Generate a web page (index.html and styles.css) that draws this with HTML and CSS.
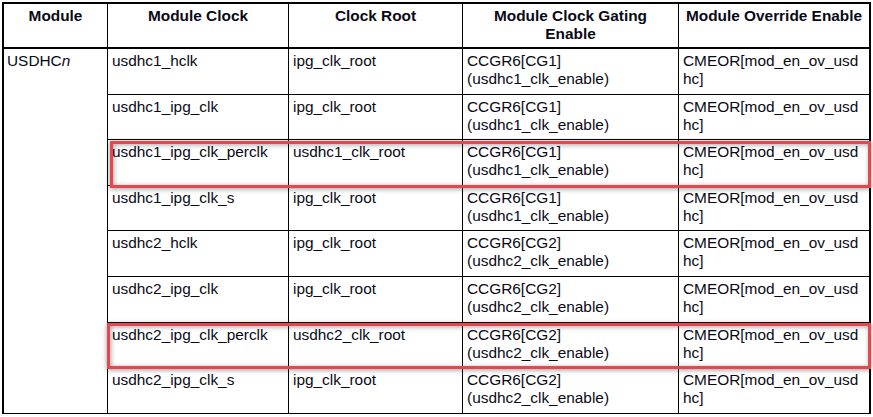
FILE: index.html
```html
<!DOCTYPE html>
<html>
<head>
<meta charset="utf-8">
<link rel="stylesheet" href="styles.css">
</head>
<body>
<div class="sheet">
  <table class="clk">
    <thead>
      <tr>
        <th class="c1">Module</th>
        <th class="c2">Module Clock</th>
        <th class="c3">Clock Root</th>
        <th class="c4">Module Clock Gating Enable</th>
        <th class="c5">Module Override Enable</th>
      </tr>
    </thead>
    <tbody>
      <tr>
        <td class="mod" rowspan="8">USDHC<i>n</i></td>
        <td>usdhc1_hclk</td>
        <td>ipg_clk_root</td>
        <td>CCGR6[CG1]<br>(usdhc1_clk_enable)</td>
        <td class="last">CMEOR[mod_en_ov_usd<br>hc]</td>
      </tr>
      <tr>
        <td>usdhc1_ipg_clk</td>
        <td>ipg_clk_root</td>
        <td>CCGR6[CG1]<br>(usdhc1_clk_enable)</td>
        <td class="last">CMEOR[mod_en_ov_usd<br>hc]</td>
      </tr>
      <tr>
        <td>usdhc1_ipg_clk_perclk</td>
        <td>usdhc1_clk_root</td>
        <td>CCGR6[CG1]<br>(usdhc1_clk_enable)</td>
        <td class="last">CMEOR[mod_en_ov_usd<br>hc]</td>
      </tr>
      <tr>
        <td>usdhc1_ipg_clk_s</td>
        <td>ipg_clk_root</td>
        <td>CCGR6[CG1]<br>(usdhc1_clk_enable)</td>
        <td class="last">CMEOR[mod_en_ov_usd<br>hc]</td>
      </tr>
      <tr>
        <td>usdhc2_hclk</td>
        <td>ipg_clk_root</td>
        <td>CCGR6[CG2]<br>(usdhc2_clk_enable)</td>
        <td class="last">CMEOR[mod_en_ov_usd<br>hc]</td>
      </tr>
      <tr>
        <td>usdhc2_ipg_clk</td>
        <td>ipg_clk_root</td>
        <td>CCGR6[CG2]<br>(usdhc2_clk_enable)</td>
        <td class="last">CMEOR[mod_en_ov_usd<br>hc]</td>
      </tr>
      <tr>
        <td>usdhc2_ipg_clk_perclk</td>
        <td>usdhc2_clk_root</td>
        <td>CCGR6[CG2]<br>(usdhc2_clk_enable)</td>
        <td class="last">CMEOR[mod_en_ov_usd<br>hc]</td>
      </tr>
      <tr>
        <td>usdhc2_ipg_clk_s</td>
        <td>ipg_clk_root</td>
        <td>CCGR6[CG2]<br>(usdhc2_clk_enable)</td>
        <td class="last">CMEOR[mod_en_ov_usd<br>hc]</td>
      </tr>
    </tbody>
  </table>
  <div class="mark mark-a"></div>
  <div class="mark mark-b"></div>
</div>
</body>
</html>
```

FILE: styles.css
```css
html, body {
  margin: 0;
  padding: 0;
  background: #ffffff;
}

.sheet {
  position: relative;
  width: 873px;
  height: 417px;
  overflow: hidden;
}

.clk {
  margin: 2px 0 0 2px;
  border-collapse: separate;
  border-spacing: 0;
  table-layout: fixed;
  width: 869px;
  border-top: 2px solid #000;
  border-left: 2px solid #000;
  border-right: 2px solid #000;
  font-family: "Liberation Sans", Arial, sans-serif;
  font-size: 15.4px;
  line-height: 18px;
  color: #0a0a16;
}

.clk th,
.clk td {
  box-sizing: border-box;
  vertical-align: top;
  padding: 3px 4px 0 4px;
  border-right: 1px solid #000;
  border-bottom: 1px solid #000;
  text-align: left;
  font-weight: normal;
}

.clk th {
  height: 45px;
  font-weight: bold;
  text-align: center;
  border-bottom: 2px solid #000;
}

.clk th.c5,
.clk td.last {
  border-right: none;
}

.c1 { width: 104px; }
.c2 { width: 181px; }
.c3 { width: 174px; }
.c4 { width: 216px; }
.c5 { width: 190px; }

.clk tbody tr {
  height: 45.6px;
}

.clk td.mod {
  padding-left: 3px;
}

.mark {
  position: absolute;
  box-sizing: border-box;
  border: 3px solid #e8464e;
  box-shadow: 0 1px 5px rgba(0, 0, 0, 0.4), inset 1px 1px 5px rgba(0, 0, 0, 0.35);
}

.mark-a {
  left: 110px;
  top: 141px;
  width: 761px;
  height: 47px;
}

.mark-b {
  left: 107px;
  top: 323px;
  width: 764px;
  height: 46px;
}
```
